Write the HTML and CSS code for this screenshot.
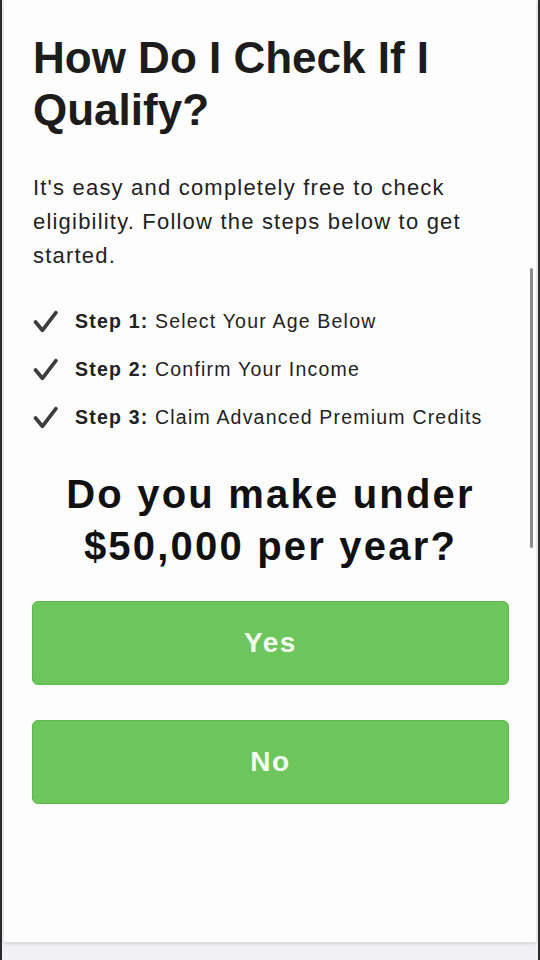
FILE: index.html
```html
<!DOCTYPE html>
<html lang="en">

<head>
    <meta charset="UTF-8">
    <meta name="viewport" content="width=device-width, initial-scale=1.0">
    <title>How Do I Check If I Qualify?</title>
    <link rel="stylesheet" href="styles.css">
</head>

<body>
    <div class="frame">
        <div class="card">
            <h1>How Do I Check If I Qualify?</h1>

            <p class="intro">It's easy and completely free to check eligibility. Follow the steps below to get started.</p>

            <!-- Steps -->
            <ul class="steps">
                <li>
                    <svg class="check" viewBox="0 0 24 22"><path d="M2.5 11.5 L9 19.5 L22 2.5" /></svg>
                    <span><strong>Step 1:</strong> Select Your Age Below</span>
                </li>
                <li>
                    <svg class="check" viewBox="0 0 24 22"><path d="M2.5 11.5 L9 19.5 L22 2.5" /></svg>
                    <span><strong>Step 2:</strong> Confirm Your Income</span>
                </li>
                <li>
                    <svg class="check" viewBox="0 0 24 22"><path d="M2.5 11.5 L9 19.5 L22 2.5" /></svg>
                    <span><strong>Step 3:</strong> Claim Advanced Premium Credits</span>
                </li>
            </ul>

            <!-- Question -->
            <h2>Do you make under $50,000 per year?</h2>

            <div class="answers">
                <button class="answer">Yes</button>
                <button class="answer">No</button>
            </div>
        </div>
        <div class="scrollbar"></div>
    </div>
</body>

</html>
```

FILE: styles.css
```css
body {
    font-family: "Liberation Sans", Arial, sans-serif;
    margin: 0;
    padding: 0;
    background-color: #f1f0f3;
    color: #1e1e1e;
}

.frame {
    position: relative;
    min-height: 960px;
    border-left: 2px solid #2b2b2b;
    border-right: 2px solid #2b2b2b;
    box-sizing: border-box;
}

.card {
    background: #fdfdfd;
    margin: 0 2px;
    padding: 32px 27px 0 28px;
    height: 942px;
    box-sizing: border-box;
    box-shadow: 0 2px 3px rgba(0, 0, 0, 0.12);
}

h1 {
    font-size: 44px;
    line-height: 52px;
    font-weight: bold;
    margin: 0 0 35px 1px;
    color: #1c1c1c;
}

.intro {
    font-size: 22px;
    line-height: 34px;
    letter-spacing: 1.2px;
    margin: 0 0 24px 1px;
    color: #222;
}

.steps {
    list-style: none;
    margin: 0;
    padding: 0 0 0 1px;
}

.steps li {
    display: flex;
    align-items: center;
    height: 48px;
    font-size: 19.5px;
    letter-spacing: 1.2px;
    color: #222;
}

.check {
    width: 25px;
    height: 23px;
    margin-right: 17px;
    flex-shrink: 0;
}

.check path {
    fill: none;
    stroke: #3d3d3d;
    stroke-width: 3.6;
    stroke-linecap: round;
    stroke-linejoin: round;
}

h2 {
    font-size: 40px;
    line-height: 52px;
    font-weight: bold;
    letter-spacing: 2.2px;
    text-align: center;
    margin: 27px 0 29px 0;
    color: #111;
}

.answers {
    display: flex;
    flex-direction: column;
    gap: 35px;
}

.answer {
    font-family: "Liberation Sans", Arial, sans-serif;
    background-color: #6cc65b;
    color: #f4fff1;
    border: 1px solid #5cb74c;
    border-radius: 6px;
    height: 84px;
    font-size: 28px;
    font-weight: bold;
    letter-spacing: 1.5px;
    cursor: pointer;
}

.answer:hover {
    background-color: #62bc51;
}

/* overlay scrollbar thumb */
.scrollbar {
    position: absolute;
    top: 268px;
    right: 5px;
    width: 3px;
    height: 280px;
    border-radius: 2px;
    background: #8d8d8d;
}
```
